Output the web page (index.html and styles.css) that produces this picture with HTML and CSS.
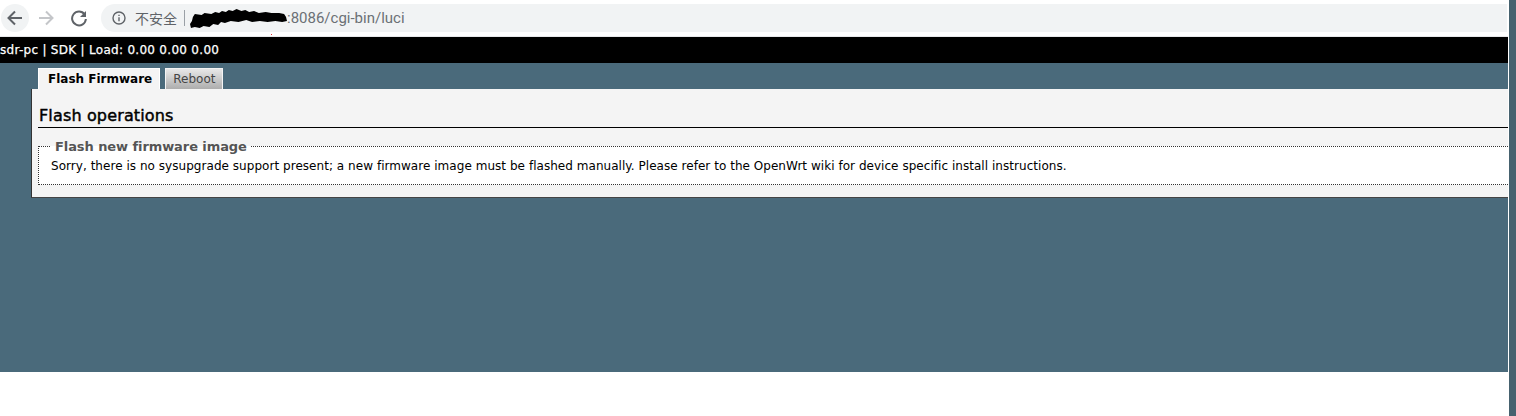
FILE: index.html
```html
<!DOCTYPE html>
<html lang="en">
<head>
<meta charset="utf-8">
<title>Flash Firmware</title>
<link rel="stylesheet" href="styles.css">
</head>
<body>
<div class="page">
  <div class="main">
    <div class="chrome">
      <button class="nav nav-back" aria-label="Back">
        <svg width="18" height="18" viewBox="0 0 18 18"><path d="M16 9H3M9 2.5 2.5 9 9 15.5" fill="none" stroke="#5f6368" stroke-width="2"/></svg>
      </button>
      <button class="nav nav-fwd" aria-label="Forward">
        <svg width="18" height="18" viewBox="0 0 18 18"><path d="M2 9h13M9 2.5 15.5 9 9 15.5" fill="none" stroke="#c4c6c9" stroke-width="2"/></svg>
      </button>
      <button class="nav nav-reload" aria-label="Reload">
        <svg width="18" height="18" viewBox="0 0 18 18"><path d="M14.6 5.4A6.9 6.9 0 1 0 15.9 10" fill="none" stroke="#5f6368" stroke-width="2"/><path d="M16 2v6h-6z" fill="#5f6368"/></svg>
      </button>
      <div class="omnibox">
        <svg class="info" width="14" height="14" viewBox="0 0 14 14"><circle cx="7" cy="7" r="6" fill="none" stroke="#5f6368" stroke-width="1.4"/><path d="M6.3 6.2h1.4v4.1H6.3zM6.3 3.7h1.4v1.4H6.3z" fill="#5f6368"/></svg>
        <span class="insecure">不安全</span>
        <span class="divider"></span>
        <svg class="redact" width="97" height="20" viewBox="0 0 100 20" preserveAspectRatio="none"><path d="M3 8 5 5 12 6 15 4 22 5 26 3 30 4 33 2 37 3 40 1 44 2 48 0 53 2 57 1 61 3 66 2 71 4 78 3 84 4 92 4 97 5 99 8 100 12 95 13 88 12 80 13 72 12 64 13 58 11 50 13 42 12 36 14 32 13 29 16 24 15 20 18 14 17 10 19 5 18 1 19 0 15 2 12Z" fill="#000"/></svg>
        <span class="url">:8086/cgi-bin/luci</span>
      </div>
      <span class="speck"></span>
    </div>
    <div class="header"><span class="brand">sdr-pc | SDK | Load: 0.00 0.00 0.00</span></div>
    <div class="content">
      <ul class="tabs">
        <li class="tab tab-active">Flash Firmware</li>
        <li class="tab">Reboot</li>
      </ul>
      <div class="panel">
        <h2 class="title">Flash operations</h2>
        <fieldset class="section">
          <legend class="legend">Flash new firmware image</legend>
          <p class="message">Sorry, there is no sysupgrade support present; a new firmware image must be flashed manually. Please refer to the OpenWrt wiki for device specific install instructions.</p>
        </fieldset>
      </div>
    </div>
  </div>
  <div class="strip"></div>
</div>
</body>
</html>
```
FILE: styles.css
```css
* { box-sizing: border-box; }
html, body { margin: 0; padding: 0; background: #fff; height: 100%; overflow: hidden; }
body { font-family: "DejaVu Sans", Verdana, sans-serif; }
.page { display: flex; height: 416px; }
.main { width: 1508px; flex: none; display: flex; flex-direction: column; height: 372px; }
.strip { width: 7px; margin-left: 1px; background: #46626f; }

.chrome { position: relative; height: 37px; flex: none; display: flex; align-items: flex-start; padding-top: 4px; background: #fff; border-bottom: 1px solid #e8e9eb; }
.speck { position: absolute; left: 271px; top: 34px; width: 1px; height: 1px; background: #e03030; }
.nav { width: 28px; height: 28px; border: 0; padding: 0; background: transparent; display: flex; align-items: center; justify-content: center; border-radius: 50%; flex: none; }
.nav-back { background: #f1f3f4; margin-left: 1px; }
.nav-fwd { margin-left: 3px; }
.nav-reload { margin-left: 5px; }
.omnibox { margin-left: 8px; flex: 1; height: 28px; background: #f1f3f4; border-radius: 14px 0 0 14px; display: flex; align-items: center; padding-left: 11px; font-family: "Roboto", "Noto Sans CJK SC", sans-serif; font-size: 14px; color: #5f6368; margin-right: 1px; }
.insecure { margin-left: 9px; font-size: 14px; font-family: "Noto Sans CJK SC", sans-serif; }
.divider { width: 1px; height: 16px; background: #9aa0a6; margin-left: 7px; }
.redact { margin-left: 5px; margin-top: 2px; flex: none; }
.url { font-size: 15px; color: #6b7075; }

.header { height: 26px; flex: none; background: #000; color: #fff; display: flex; align-items: center; font-size: 12px; letter-spacing: 0.29px; -webkit-text-stroke: 0.25px #fff; }
.content { flex: 1; background: #4a6a7b; padding: 5px 0 0 31px; }

.tabs { list-style: none; margin: 0 0 0 7px; padding: 0; display: flex; gap: 5px; height: 21px; align-items: flex-end; }
.tab { height: 21px; padding: 0 7px; font-size: 12px; line-height: 20px; color: #444; background: linear-gradient(#e8e8e8, #adadad); border: 1px solid #f4f4f4; border-bottom: 0; }
.tab-active { padding: 0 7px 0 9px; background: #f4f4f4; color: #000; font-weight: bold; border-color: #fff; }

.panel { background: #f4f4f4; border-left: 1px solid #333; border-bottom: 1px solid #444; padding: 17px 0 12px 6px; height: 109px; }
.title { margin: 0; padding-left: 1px; font-size: 16px; letter-spacing: 0.15px; -webkit-text-stroke: 0.45px #000; line-height: 20px; font-weight: 400; color: #000; border-bottom: 1px solid #000; height: 22px; }
.section { margin: 12px 0 0; padding: 0 0 11px 12px; background: #fff; border: 1px dotted #333; border-right: 0; height: 45px; min-width: 0; }
.legend { margin-left: 0; padding: 0 4px; font-size: 13px; letter-spacing: -0.08px; font-weight: bold; color: #555; line-height: 13px; }
.message { margin: 4px 0 0; font-size: 12px; letter-spacing: 0.04px; line-height: 18px; color: #000; }
```
